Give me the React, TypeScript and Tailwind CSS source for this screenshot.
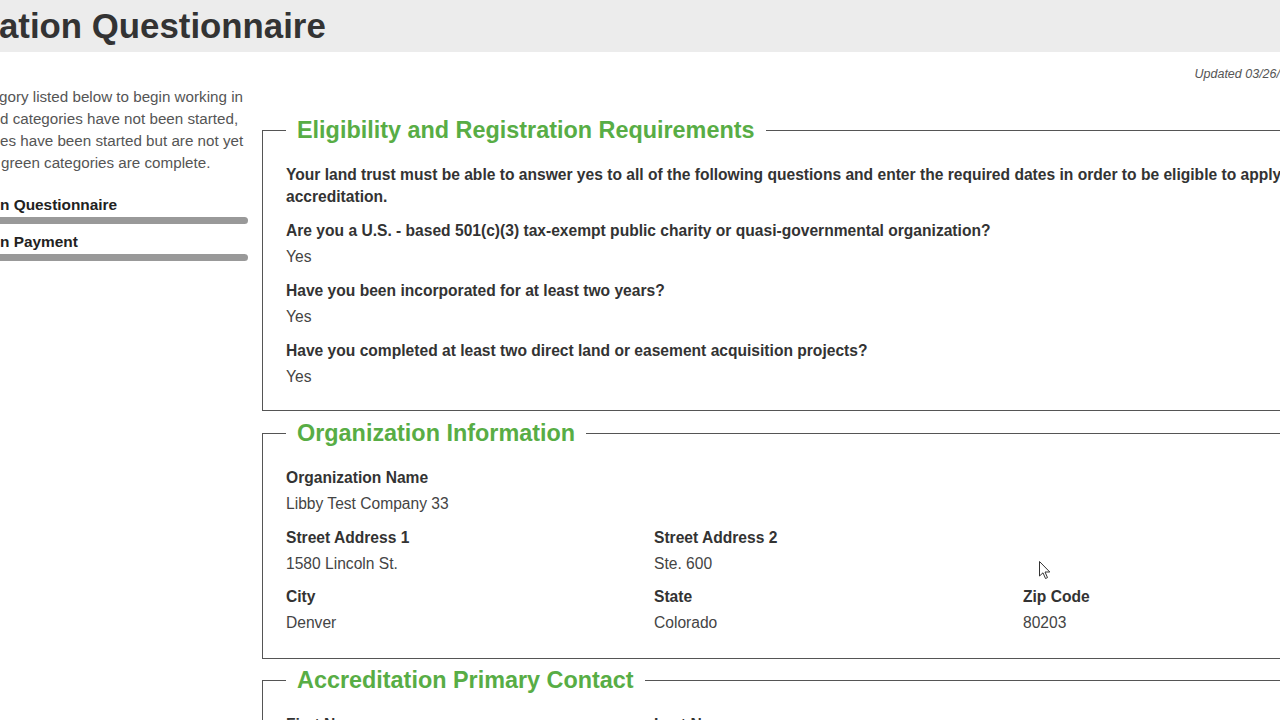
import React from "react";

const font = { fontFamily: '"Liberation Sans", Arial, sans-serif' };

function Fieldset({ title, children, className = "" }: { title: string; children: React.ReactNode; className?: string }) {
  return (
    <fieldset className={`border border-[#555] mr-[-140px] px-[23px] ${className}`}>
      <legend className="px-[11px] text-[23.4px] leading-[26px] font-bold text-[#58ad45]">{title}</legend>
      {children}
    </fieldset>
  );
}

function QA({ q, a }: { q: string; a: string }) {
  return (
    <div>
      <div className="font-bold text-[#333] text-[15.6px] leading-[22px]">{q}</div>
      <div className="mt-[4px] text-[#444] text-[15.6px] leading-[22px]">{a}</div>
    </div>
  );
}

function Field({ label, value }: { label: string; value?: string }) {
  return (
    <div>
      <div className="font-bold text-[#333] text-[15.6px] leading-[22px]">{label}</div>
      {value !== undefined && <div className="mt-[4px] text-[#444] text-[15.6px] leading-[22px]">{value}</div>}
    </div>
  );
}

export default function App() {
  return (
    <div className="relative w-[1280px] h-[720px] overflow-hidden bg-white" style={font}>
      <div className="h-[52px] bg-[#ececec] flex items-center overflow-hidden">
        <div className="ml-[-1px] text-[34.8px] font-bold text-[#333] leading-none whitespace-nowrap">ation Questionnaire</div>
      </div>
      <div className="flex">
        <div className="w-[248px] shrink-0 pt-[34px] overflow-hidden">
          <div className="text-[15.2px] leading-[22px] text-[#555] whitespace-nowrap">
            <div className="ml-[-1px]">gory listed below to begin working in</div>
            <div>d categories have not been started,</div>
            <div>es have been started but are not yet</div>
            <div className="ml-[1px]">green categories are complete.</div>
          </div>
          <div className="mt-[20px] text-[15.4px] leading-[22px] font-bold text-[#222] whitespace-nowrap">n Questionnaire</div>
          <div className="mt-[1px] h-[7px] bg-[#999] rounded-r-full"></div>
          <div className="mt-[7px] text-[15.4px] leading-[22px] font-bold text-[#222] whitespace-nowrap">n Payment</div>
          <div className="mt-[1px] h-[7px] bg-[#999] rounded-r-full"></div>
        </div>
        <div className="ml-[14px] flex-1 min-w-0 pt-[15px]">
          <div className="text-right text-[12.5px] leading-[14px] italic text-[#555] whitespace-nowrap">Updated 03/26/</div>
          <Fieldset title="Eligibility and Registration Requirements" className="mt-[36px] pt-[21px] pb-[22px]">
            <div className="flex flex-col gap-[12px]">
              <div className="font-bold text-[#333] text-[15.6px] leading-[22px]">
                Your land trust must be able to answer yes to all of the following questions and enter the required dates in order to be eligible to apply for accreditation.
              </div>
              <QA q="Are you a U.S. - based 501(c)(3) tax-exempt public charity or quasi-governmental organization?" a="Yes" />
              <QA q="Have you been incorporated for at least two years?" a="Yes" />
              <QA q="Have you completed at least two direct land or easement acquisition projects?" a="Yes" />
            </div>
          </Fieldset>
          <Fieldset title="Organization Information" className="mt-[9px] pt-[21px] pb-[24px]">
            <div className="flex flex-col gap-[12px]">
              <Field label="Organization Name" value="Libby Test Company 33" />
              <div className="grid grid-cols-[368px_369px_369px]">
                <Field label="Street Address 1" value="1580 Lincoln St." />
                <Field label="Street Address 2" value="Ste. 600" />
                <div></div>
              </div>
              <div className="grid grid-cols-[368px_369px_369px] mt-[-1px]">
                <Field label="City" value="Denver" />
                <Field label="State" value="Colorado" />
                <Field label="Zip Code" value="80203" />
              </div>
            </div>
          </Fieldset>
          <Fieldset title="Accreditation Primary Contact" className="mt-[8px] pt-[21px] pb-[24px]">
            <div className="grid grid-cols-[368px_369px_369px]">
              <Field label="First Name" value="" />
              <Field label="Last Name" value="" />
              <div></div>
            </div>
          </Fieldset>
        </div>
      </div>
      <svg className="absolute left-[1039px] top-[561px]" width="12" height="19" viewBox="0 0 12 19">
        <path d="M0.5 0.5 L0.5 15 L4 11.8 L6.5 17.5 L8.5 16.6 L6 11 L10.8 11 Z" fill="white" stroke="#333" strokeWidth="1" strokeLinejoin="round" />
      </svg>
    </div>
  );
}
